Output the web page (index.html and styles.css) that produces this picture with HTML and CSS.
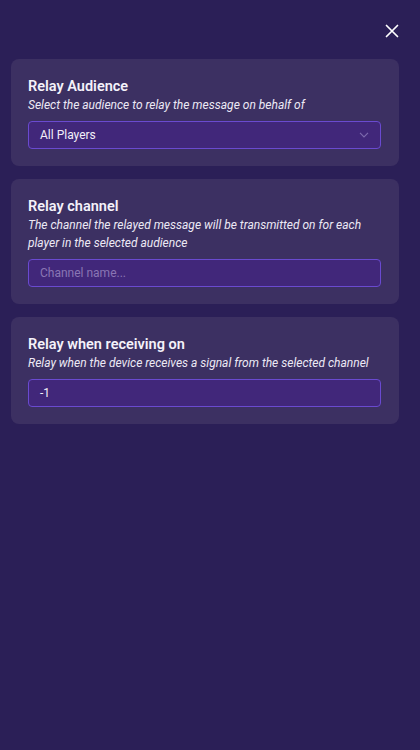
FILE: index.html
```html
<!DOCTYPE html>
<html>
<head>
<meta charset="utf-8">
<link rel="stylesheet" href="styles.css">
</head>
<body>
<div class="page">
  <div class="topbar">
    <button class="close" aria-label="Close">
      <svg width="14" height="14" viewBox="0 0 14 14"><path d="M1.5 1.5 L12.5 12.5 M12.5 1.5 L1.5 12.5" stroke="#ffffff" stroke-width="1.7" stroke-linecap="round"/></svg>
    </button>
  </div>
  <div class="cards">
    <section class="card">
      <h2 class="title">Relay Audience</h2>
      <p class="desc">Select the audience to relay the message on behalf of</p>
      <div class="field select">
        <span class="value">All Players</span>
        <svg class="chev" width="10" height="6" viewBox="0 0 10 6"><path d="M1 0.8 L5 5 L9 0.8" fill="none" stroke="#7d6aae" stroke-width="1.1"/></svg>
      </div>
    </section>
    <section class="card">
      <h2 class="title">Relay channel</h2>
      <p class="desc">The channel the relayed message will be transmitted on for each player in the selected audience</p>
      <div class="field"><span class="placeholder">Channel name...</span></div>
    </section>
    <section class="card">
      <h2 class="title">Relay when receiving on</h2>
      <p class="desc">Relay when the device receives a signal from the selected channel</p>
      <div class="field"><span class="value">-1</span></div>
    </section>
  </div>
</div>
</body>
</html>
```

FILE: styles.css
```css
* { box-sizing: border-box; }
html, body { margin: 0; padding: 0; }
body {
  background: #2b1f57;
  font-family: Roboto, "Noto Sans", sans-serif;
  color: #ffffff;
  width: 420px;
  height: 750px;
  overflow: hidden;
}
.page { padding: 0 21px 0 11px; }
.topbar {
  display: flex;
  justify-content: flex-end;
  height: 59px;
  padding-top: 24px;
}
.close {
  background: none;
  border: 0;
  padding: 0;
  width: 14px;
  height: 14px;
  cursor: pointer;
  display: block;
}
.close svg { display: block; }
.cards { display: flex; flex-direction: column; gap: 13px; }
.card {
  background: #3c3062;
  border-radius: 8px;
  padding: 19px 18px 17px 17px;
}
.title {
  margin: 0;
  font-size: 14.5px;
  font-weight: 600;
  line-height: 17px;
  color: #f4f2fa;
}
.desc {
  margin: 1px 0 7px 0;
  font-size: 12px;
  font-style: italic;
  line-height: 18px;
  color: #ece9f5;
}
.field {
  height: 28px;
  border: 1px solid #6a4ad0;
  border-radius: 4px;
  background: #41277a;
  display: flex;
  align-items: center;
  padding: 0 11px;
  font-size: 12px;
}
.select { justify-content: space-between; }
.value { color: #f2eff8; }
.placeholder { color: #8a76b4; }
.chev { margin-right: 0; }
```
